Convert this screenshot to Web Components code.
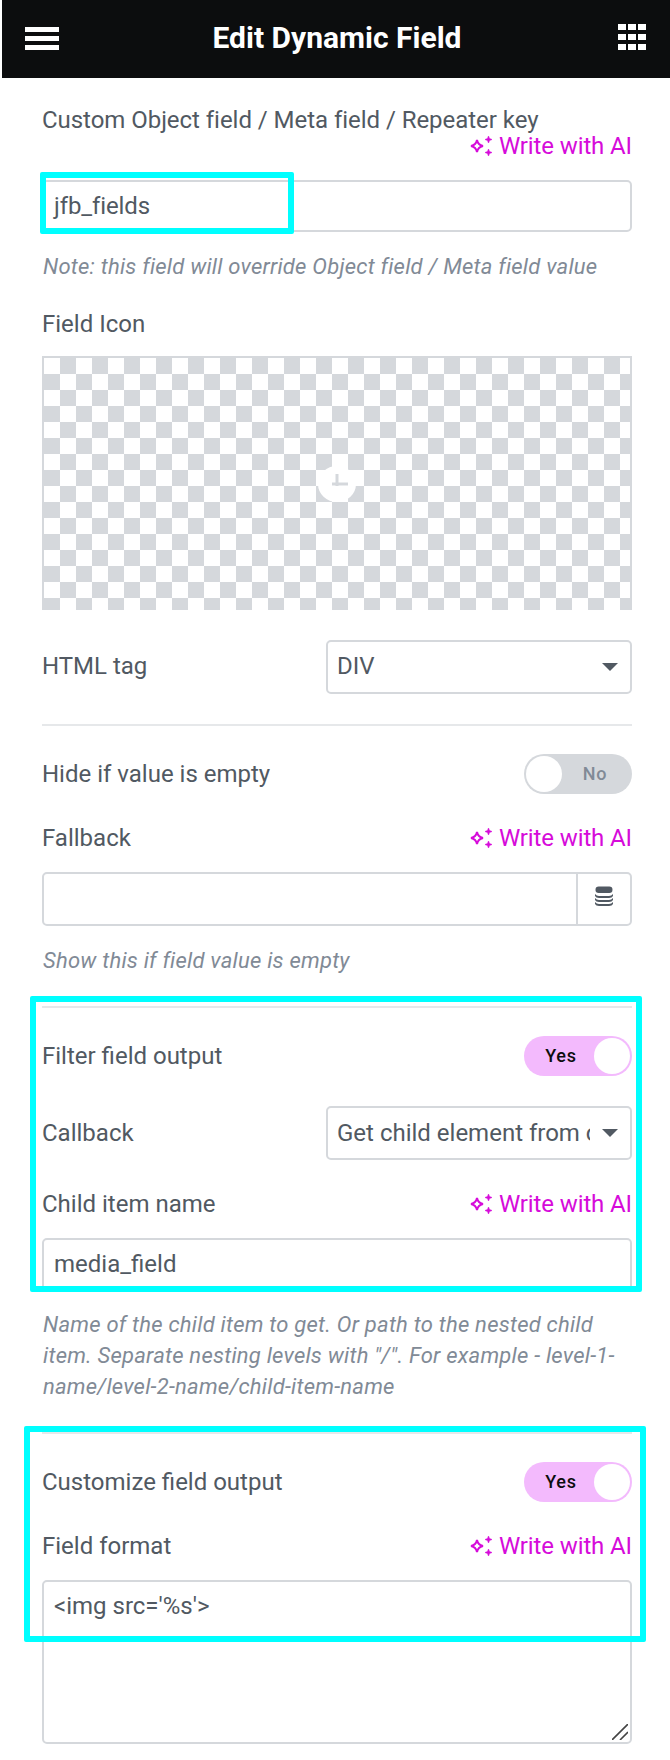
<!DOCTYPE html>
<html lang="en">
<head>
<meta charset="UTF-8">
<title>Edit Dynamic Field</title>
<style>
  body {
    margin: 0;
    background: #fff;
    font-family: Roboto, "Liberation Sans", sans-serif;
    font-size: 24px;
    line-height: 26px;
    color: #515962;
  }
  .mt-17 { margin-top: 17px; }
  .mt-19 { margin-top: 19px; }
  .mt-21 { margin-top: 21px; }
  .mt-28 { margin-top: 28px; }
  .mt-29 { margin-top: 29px; }
  .mt-30 { margin-top: 30px; }
  .mt-31 { margin-top: 31px; }
</style>
</head>
<body>
<editor-panel>
  <panel-header slot="header">Edit Dynamic Field</panel-header>

  <control-label class="mt-29" ai stacked style="--label-spacing: -0.04px">Custom Object field / Meta field / Repeater key</control-label>
  <highlight-frame class="mt-21" style="--frame: -8px 338px -2px -2px">
    <text-field style="--height: 52px; letter-spacing: -0.1px">jfb_fields</text-field>
  </highlight-frame>
  <control-note class="mt-19">Note: this field will override Object field / Meta field value</control-note>

  <control-label class="mt-29">Field Icon</control-label>
  <media-field class="mt-19"></media-field>

  <select-row class="mt-30" label="HTML tag" style="--text-shift: 2px">DIV</select-row>
  <panel-divider class="mt-30"></panel-divider>
  <toggle-row class="mt-28" label="Hide if value is empty"></toggle-row>

  <control-label class="mt-31" ai>Fallback</control-label>
  <text-field class="mt-21" dynamic></text-field>
  <control-note class="mt-19">Show this if field value is empty</control-note>

  <highlight-frame class="mt-30" style="--frame: -10px -10px 0 -12px">
    <panel-divider></panel-divider>
    <toggle-row class="mt-28" label="Filter field output" checked></toggle-row>
    <select-row class="mt-30" label="Callback">Get child element from object/array</select-row>
    <control-label class="mt-31" ai>Child item name</control-label>
    <text-field class="mt-21" style="--text-shift: 2px">media_field</text-field>
  </highlight-frame>
  <control-note class="mt-17">Name of the child item to get. Or path to the nested child<br>item. Separate nesting levels with "/". For example - level-1-<br>name/level-2-name/child-item-name</control-note>

  <highlight-frame class="mt-30" style="--frame: -6px -14px 102px -18px">
    <panel-divider></panel-divider>
    <toggle-row class="mt-28" label="Customize field output" checked></toggle-row>
    <control-label class="mt-31" ai>Field format</control-label>
    <text-field class="mt-21" multiline style="--height: 164px">&lt;img src='%s'&gt;</text-field>
  </highlight-frame>
</editor-panel>

<script>
class EditorPanel extends HTMLElement {
  constructor() {
    super();
    this.attachShadow({ mode: 'open' });
    this.shadowRoot.innerHTML = `
      <style>
        :host { display: block; height: 1760px; overflow: hidden; }
        .controls { display: flex; flex-direction: column; padding: 0 38px 0 42px; }
      </style>
      <slot name="header"></slot>
      <div class="controls"><slot></slot></div>
    `;
  }
}
customElements.define('editor-panel', EditorPanel);

class PanelHeader extends HTMLElement {
  constructor() {
    super();
    this.attachShadow({ mode: 'open' });
    this.shadowRoot.innerHTML = `
      <style>
        :host {
          display: flex;
          align-items: center;
          justify-content: space-between;
          height: 78px;
          margin-left: 2px;
          padding: 0 24px 2px 22px;
          box-sizing: border-box;
          background: #0c0d0e;
          color: #fff;
          font-size: 30px;
          font-weight: 700;
        }
        svg { display: block; fill: #fff; }
        .menu { padding-left: 1px; }
        .apps { padding-bottom: 2px; }
        .title { padding: 0 3px 1px 0; }
      </style>
      <svg class="menu" width="34" height="24" viewBox="0 0 34 24">
        <path d="M0 1h34v5H0zM0 10h34v5H0zM0 19h34v5H0z"/>
      </svg>
      <span class="title"><slot></slot></span>
      <svg class="apps" width="28" height="26" viewBox="0 0 28 26">
        <path d="M0 0h8v6H0zM10 0h8v6h-8zM20 0h8v6h-8zM0 10h8v6H0zM10 10h8v6h-8zM20 10h8v6h-8zM0 20h8v6H0zM10 20h8v6h-8zM20 20h8v6h-8z"/>
      </svg>
    `;
  }
}
customElements.define('panel-header', PanelHeader);

class ControlLabel extends HTMLElement {
  constructor() {
    super();
    this.attachShadow({ mode: 'open' });
  }

  connectedCallback() {
    this.shadowRoot.innerHTML = `
      <style>
        :host { display: flex; justify-content: space-between; white-space: nowrap; }
        :host([stacked]) { flex-direction: column; }
        .label { letter-spacing: var(--label-spacing, 0); }
      </style>
      <span class="label"><slot></slot></span>
      ${this.hasAttribute('ai') ? '<ai-button></ai-button>' : ''}
    `;
  }
}
customElements.define('control-label', ControlLabel);

class AiButton extends HTMLElement {
  constructor() {
    super();
    this.attachShadow({ mode: 'open' });
    this.shadowRoot.innerHTML = `
      <style>
        :host { display: flex; justify-content: flex-end; align-items: center; gap: 7px; color: #d60bda; }
        svg { display: block; }
        span { letter-spacing: -0.12px; }
      </style>
      <svg width="23" height="22" viewBox="0 0 23 22" fill="currentColor">
        <path d="M8 5Q9 10 14 11Q9 12 8 17Q7 12 2 11Q7 10 8 5Z" fill="none" stroke="currentColor" stroke-width="2"/>
        <path d="M19.500 1l1 2.500 2.500 1-2.500 1-1 2.500-1-2.500-2.500-1 2.500-1zM19.500 14l1 2.500 2.500 1-2.500 1-1 2.500-1-2.500-2.500-1 2.500-1z" stroke="currentColor" stroke-width=".6"/>
      </svg>
      <span>Write with AI</span>
    `;
  }
}
customElements.define('ai-button', AiButton);

class ControlNote extends HTMLElement {
  constructor() {
    super();
    this.attachShadow({ mode: 'open' });
    this.shadowRoot.innerHTML = `
      <style>
        :host {
          display: block;
          padding-left: 1px;
          font-size: 22px;
          line-height: 31px;
          letter-spacing: 0.23px;
          font-style: italic;
          color: #818a96;
          white-space: nowrap;
        }
      </style>
      <slot></slot>
    `;
  }
}
customElements.define('control-note', ControlNote);

class TextField extends HTMLElement {
  constructor() {
    super();
    this.attachShadow({ mode: 'open' });
  }

  connectedCallback() {
    const dynamic = `
      <span class="tags">
        <svg width="18" height="20" viewBox="0 0 18 20">
          <rect x="0.500" y="0.500" width="17" height="6.500" rx="3.200"/>
          <path d="M0 8q1.500 2 4 2h10q2.500 0 4-2v2q-1 2-4 2H4q-3 0-4-2zM0 12q1.500 2 4 2h10q2.500 0 4-2v2q-1 2-4 2H4q-3 0-4-2zM0 16q1.500 2 4 2h10q2.500 0 4-2v2q-1 2-4 2H4q-3 0-4-2z"/>
        </svg>
      </span>`;
    const grip = `
      <svg class="grip" width="16" height="16" viewBox="0 0 16 16">
        <path d="M0 16L16 0M8 16l8-8"/>
      </svg>`;

    this.shadowRoot.innerHTML = `
      <style>
        :host {
          display: flex;
          align-items: center;
          height: var(--height, 54px);
          box-sizing: border-box;
          border: 2px solid #d5d8dc;
          border-radius: 5px;
        }
        :host([multiline]) { align-items: flex-start; }
        .value { flex: 1; padding: 0 0 var(--text-shift, 0) 10px; }
        :host([multiline]) .value { padding-top: 11px; }
        .tags {
          display: flex;
          justify-content: center;
          align-self: stretch;
          width: 54px;
          padding: 12px 0 0 0;
          box-sizing: border-box;
          border-left: 2px solid #d5d8dc;
        }
        .tags svg { fill: #515962; }
        .grip { align-self: flex-end; margin: 0 2px 2px 0; stroke: #444; stroke-width: 1.6; }
      </style>
      <span class="value"><slot></slot></span>
      ${this.hasAttribute('dynamic') ? dynamic : ''}
      ${this.hasAttribute('multiline') ? grip : ''}
    `;
  }
}
customElements.define('text-field', TextField);

class MediaField extends HTMLElement {
  constructor() {
    super();
    this.attachShadow({ mode: 'open' });
    this.shadowRoot.innerHTML = `
      <style>
        :host {
          display: flex;
          align-items: center;
          justify-content: center;
          height: 254px;
          box-sizing: border-box;
          border: 2px solid #d5d8dc;
          border-bottom: 0;
          background: repeating-conic-gradient(#d5d8dc 0 25%, #fff 0 50%) 0 0 / 32px 32px;
        }
        svg { display: block; fill: #fff; }
      </style>
      <svg width="38" height="36" viewBox="0 0 38 36">
        <path fill-rule="evenodd" d="M19 0a19 18 0 0 1 0 36a19 18 0 0 1 0-36zM17.500 8v8.500H8v3h9.500V28h3v-8.500H30v-3h-9.500V8z"/>
      </svg>
    `;
  }
}
customElements.define('media-field', MediaField);

class SelectRow extends HTMLElement {
  constructor() {
    super();
    this.attachShadow({ mode: 'open' });
  }

  connectedCallback() {
    this.shadowRoot.innerHTML = `
      <style>
        :host { display: flex; align-items: center; justify-content: space-between; }
        .label, .value { padding-bottom: var(--text-shift, 0); }
        .select {
          display: flex;
          align-items: center;
          width: 306px;
          height: 54px;
          box-sizing: border-box;
          padding: 0 12px 0 9px;
          border: 2px solid #d5d8dc;
          border-radius: 5px;
        }
        .value { width: 253px; overflow: hidden; white-space: nowrap; }
        svg { display: block; margin-left: auto; fill: #515962; }
      </style>
      <span class="label">${this.getAttribute('label')}</span>
      <div class="select">
        <span class="value"><slot></slot></span>
        <svg width="16" height="8" viewBox="0 0 16 8"><path d="M0 0h16L8 8z"/></svg>
      </div>
    `;
  }
}
customElements.define('select-row', SelectRow);

class ToggleRow extends HTMLElement {
  constructor() {
    super();
    this.attachShadow({ mode: 'open' });
  }

  connectedCallback() {
    const checked = this.hasAttribute('checked');
    this.shadowRoot.innerHTML = `
      <style>
        :host { display: flex; align-items: center; justify-content: space-between; }
        .toggle {
          display: flex;
          align-items: center;
          width: 108px;
          height: 40px;
          box-sizing: border-box;
          padding: 2px;
          border-radius: 20px;
          background: #d5d8dc;
          color: #818a96;
          font-size: 18px;
          font-weight: 500;
        }
        .knob { width: 36px; height: 36px; border-radius: 50%; background: #fff; }
        .state { flex: 1; padding: 0 2px 1px 0; text-align: center; letter-spacing: 0.8px; }
        :host([checked]) .toggle { flex-direction: row-reverse; background: #f3bafd; color: #0c0d0e; }
        :host([checked]) .state { padding: 0 0 1px 2px; }
      </style>
      <span>${this.getAttribute('label')}</span>
      <div class="toggle">
        <span class="knob"></span>
        <span class="state">${checked ? 'Yes' : 'No'}</span>
      </div>
    `;
  }
}
customElements.define('toggle-row', ToggleRow);

class PanelDivider extends HTMLElement {
  constructor() {
    super();
    this.attachShadow({ mode: 'open' });
    this.shadowRoot.innerHTML = `
      <style>
        :host { display: block; height: 2px; background: #e6e8ea; }
      </style>
    `;
  }
}
customElements.define('panel-divider', PanelDivider);

// Outlines part of its content; --frame is the inset from the content box
class HighlightFrame extends HTMLElement {
  constructor() {
    super();
    this.attachShadow({ mode: 'open' });
    this.shadowRoot.innerHTML = `
      <style>
        :host { display: flex; flex-direction: column; position: relative; }
        .frame {
          position: absolute;
          inset: var(--frame, 0);
          border: 6px solid #00ffff;
          border-radius: 2px;
          pointer-events: none;
        }
      </style>
      <slot></slot>
      <div class="frame"></div>
    `;
  }
}
customElements.define('highlight-frame', HighlightFrame);
</script>
</body>
</html>
